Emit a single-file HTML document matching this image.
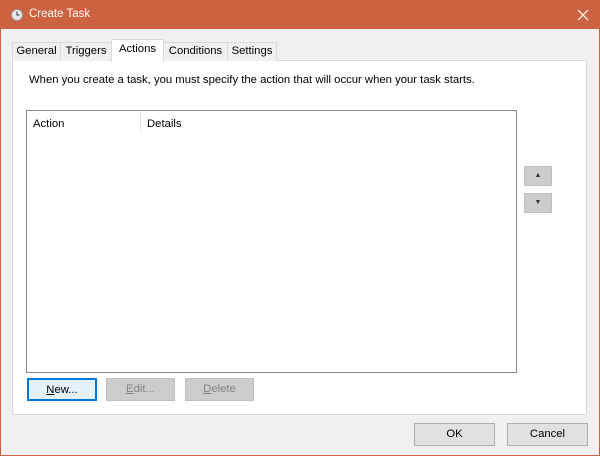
<!DOCTYPE html><html><head><style>
*{box-sizing:border-box;margin:0;padding:0}
body{width:600px;height:456px;background:#fff;font-family:"Liberation Sans",sans-serif;font-size:11.3px;color:#000;position:relative;overflow:hidden}
.win{position:absolute;left:0;top:0;width:600px;height:456px;background:#f0f0f0;border:1px solid #cc6240}
.title{position:absolute;left:0;top:0;width:600px;height:29px;background:#cc6240;color:#fff}
.abs{position:absolute}
.tab{position:absolute;top:42px;height:19px;border:1px solid #d9d9d9;border-bottom:none;background:#f0f0f0;text-align:center;line-height:17px;font-size:11.3px}
.btn{position:absolute;height:22px;border:1px solid #adadad;background:#e1e1e1;text-align:center;line-height:20px;font-size:11.3px}
.dis{background:#cccccc;border-color:#bfbfbf;color:#838383}
</style></head><body>
<div class="win"></div>
<div class="title">
<svg class="abs" style="left:11px;top:9px" width="12" height="12"><circle cx="6" cy="6" r="5.5" fill="#e8e8e8" stroke="#999"/><path d="M6 2.5V6H8.5" stroke="#555" stroke-width="1.2" fill="none"/></svg>
<span class="abs" style="left:29px;top:8px;font-size:11.5px">Create Task</span>
<svg class="abs" style="left:577px;top:9px" width="12" height="12"><path d="M1 1L11 11M11 1L1 11" stroke="#fff" stroke-width="1.2"/></svg>
</div>
<div class="abs" style="left:12px;top:60px;width:575px;height:355px;background:#fff;border:1px solid #d9d9d9"></div>
<div class="tab" style="left:12px;width:49px">General</div>
<div class="tab" style="left:60px;width:52px">Triggers</div>
<div class="tab" style="left:111px;top:39px;height:23px;width:53px;background:#fff;line-height:19px">Actions</div>
<div class="tab" style="left:163px;width:65px">Conditions</div>
<div class="tab" style="left:227px;width:50px">Settings</div>
<div class="abs" style="left:29px;top:74px">When you create a task, you must specify the action that will occur when your task starts.</div>
<div class="abs" style="left:26px;top:110px;width:491px;height:263px;border:1px solid #828790;background:#fff"></div>
<div class="abs" style="left:33px;top:118px">Action</div>
<div class="abs" style="left:140px;top:112px;width:1px;height:20px;background:#e5e5e5"></div>
<div class="abs" style="left:147px;top:118px">Details</div>
<div class="btn dis" style="left:524px;top:166px;width:28px;height:20px;font-size:7px;line-height:18px;color:#333">▲</div>
<div class="btn dis" style="left:524px;top:193px;width:28px;height:20px;font-size:7px;line-height:18px;color:#333">▼</div>
<div class="btn" style="left:27px;top:378px;width:70px;height:23px;border:2px solid #0078d7;background:#e5f1fb"><u>N</u>ew...</div>
<div class="btn dis" style="left:106px;top:378px;width:69px;height:23px"><u>E</u>dit...</div>
<div class="btn dis" style="left:185px;top:378px;width:69px;height:23px"><u>D</u>elete</div>
<div class="btn" style="left:414px;top:423px;width:81px;height:23px">OK</div>
<div class="btn" style="left:507px;top:423px;width:81px;height:23px">Cancel</div>
</body></html>
